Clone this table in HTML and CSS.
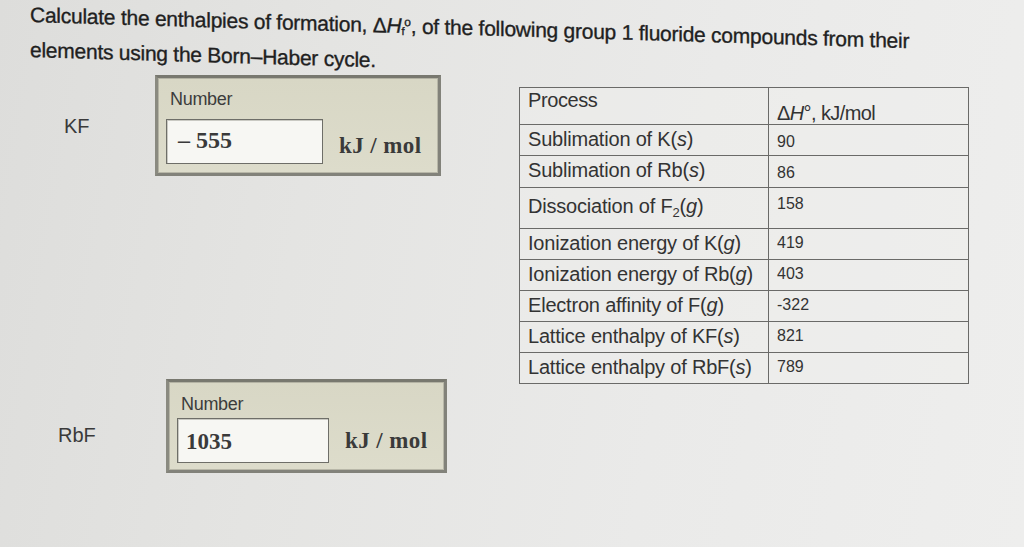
FILE: index.html
```html
<!DOCTYPE html>
<html>
<head>
<meta charset="utf-8">
<link rel="stylesheet" href="styles.css">
</head>
<body>
<div class="page">
  <p class="title">Calculate the enthalpies of formation, Δ<i>H</i><sub class="f">f</sub><sup class="o">o</sup>, of the following group 1 fluoride compounds from their elements using the Born–Haber cycle.</p>
  <div class="content">
    <div class="answers">
      <div class="answer a1">
        <div class="label">KF</div>
        <div class="box">
          <div class="num">Number</div>
          <div class="row">
            <div class="input">– 555</div>
            <div class="unit">kJ / mol</div>
          </div>
        </div>
      </div>
      <div class="answer a2">
        <div class="label">RbF</div>
        <div class="box">
          <div class="num">Number</div>
          <div class="row">
            <div class="input">1035</div>
            <div class="unit">kJ / mol</div>
          </div>
        </div>
      </div>
    </div>
    <table class="data">
      <tr class="head"><td class="proc">Process</td><td class="val hv">Δ<i>H</i>°, kJ/mol</td></tr>
      <tr class="r1"><td class="proc">Sublimation of K(<i>s</i>)</td><td class="val">90</td></tr>
      <tr class="r2"><td class="proc">Sublimation of Rb(<i>s</i>)</td><td class="val">86</td></tr>
      <tr class="r3"><td class="proc">Dissociation of F<sub>2</sub>(<i>g</i>)</td><td class="val">158</td></tr>
      <tr class="r4"><td class="proc">Ionization energy of K(<i>g</i>)</td><td class="val">419</td></tr>
      <tr class="r4"><td class="proc">Ionization energy of Rb(<i>g</i>)</td><td class="val">403</td></tr>
      <tr class="r4"><td class="proc">Electron affinity of F(<i>g</i>)</td><td class="val">-322</td></tr>
      <tr class="r4"><td class="proc">Lattice enthalpy of KF(<i>s</i>)</td><td class="val">821</td></tr>
      <tr class="r4"><td class="proc">Lattice enthalpy of RbF(<i>s</i>)</td><td class="val">789</td></tr>
    </table>
  </div>
</div>
</body>
</html>
```

FILE: styles.css
```css
html, body {
  margin: 0;
  padding: 0;
}
body {
  width: 1024px;
  height: 547px;
  overflow: hidden;
  background: linear-gradient(100deg, #dddddb 0%, #e4e4e2 30%, #eaeae9 65%, #eeeeed 100%);
  font-family: "Liberation Sans", Arial, sans-serif;
  color: #2a2a2a;
}
.page {
  padding: 0 0 0 30px;
}
.title {
  margin: -3px 0 0 0;
  width: 895px;
  font-size: 21px;
  line-height: 29px;
  color: #1f1f1f;
  -webkit-text-stroke: 0.35px #1f1f1f;
  letter-spacing: -0.25px;
  transform: skewY(1.7deg);
  transform-origin: 0 0;
}
.title i { font-style: italic; }
.title .f {
  font-size: 11px;
  vertical-align: -2px;
}
.title .o {
  font-size: 12px;
  vertical-align: 7px;
}
.content {
  display: flex;
  margin-top: 7px;
}
.answers {
  width: 489px;
  display: flex;
  flex-direction: column;
}
.answer {
  display: flex;
  align-items: flex-start;
}
.label {
  font-size: 20px;
  color: #3a3a3a;
}
.a1 {
  margin-top: 4px;
}
.a1 .label {
  width: 91px;
  padding-left: 34px;
  margin-top: 40px;
}
.a2 {
  margin-top: 203px;
}
.a2 .label {
  width: 108px;
  padding-left: 28px;
  margin-top: 45px;
}
.box {
  box-sizing: border-box;
  border: 3px solid #82827a;
  border-top-color: #78786f;
  border-left-color: #8a8a80;
  background: linear-gradient(180deg, #d8d7c5 0%, #dddccb 100%);
  box-shadow: inset 1px 1px 0 #b4b3a4, inset -1px -1px 0 #b8b7a8;
  padding: 9px 10px 0 8px;
}
.a1 .box {
  width: 286px;
  height: 101px;
}
.a2 .box {
  width: 281px;
  height: 94px;
  padding-top: 10px;
}
.num {
  font-size: 18px;
  color: #3c3c3c;
  height: 24px;
  line-height: 24px;
  padding-left: 4px;
  letter-spacing: -0.3px;
}
.a1 .num { margin-bottom: 8px; }
.a2 .num { margin-bottom: 2px; }
.row {
  display: flex;
  align-items: center;
}
.input {
  box-sizing: border-box;
  width: 157px;
  height: 45px;
  background: #f7f7f3;
  border: 1px solid #6e6e68;
  box-shadow: inset 1px 1px 0 #c9c9c2;
  font-family: "Liberation Serif", "Times New Roman", serif;
  font-weight: bold;
  font-size: 24px;
  line-height: 28px;
  color: #3a3a3a;
  padding: 6px 0 0 11px;
}
.a2 .input {
  width: 152px;
  font-size: 23px;
  padding: 9px 0 0 8px;
}
.unit {
  font-family: "Liberation Serif", "Times New Roman", serif;
  font-weight: bold;
  font-size: 23px;
  color: #3a3a3a;
  margin-left: 16px;
  margin-top: 8px;
  letter-spacing: 0.4px;
}
.a2 .unit {
  margin-top: 0;
}
.data {
  border-collapse: collapse;
  margin-top: 16px;
  width: 450px;
  height: 295px;
  border: 1.5px solid #6a6a68;
  background: rgba(240, 240, 238, 0.35);
}
.data td {
  border: 1px solid #6a6a68;
  padding: 0;
  vertical-align: top;
}
.proc {
  width: 240px;
  font-size: 20px;
  line-height: 23px;
  color: #333;
  padding: 3px 0 0 8px !important;
  letter-spacing: -0.2px;
}
.head .proc {
  font-size: 20px;
  letter-spacing: -0.4px;
  padding-top: 1px !important;
}
.val {
  font-size: 16px;
  line-height: 18px;
  color: #333;
  padding: 8px 0 0 8px !important;
}
.hv {
  font-size: 20px;
  line-height: 22px;
  padding-top: 14px !important;
  letter-spacing: -0.6px;
}
.head { height: 37px; }
.r1 { height: 31px; }
.r2 { height: 32px; }
.r3 { height: 41px; }
.r4 { height: 31px; }
.r3 .proc { padding-top: 7px !important; }
.r3 .val { padding-top: 7px !important; }
.r4 .proc { padding-top: 3px !important; }
.r4 .val { padding-top: 5px !important; }
.data sub {
  font-size: 13px;
  line-height: 0;
  vertical-align: -4px;
}
```
